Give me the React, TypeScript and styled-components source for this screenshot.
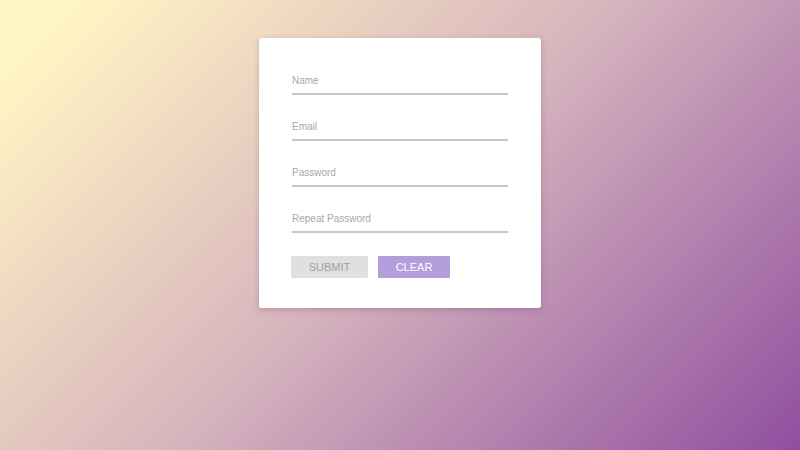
import React from 'react';
import styled, { createGlobalStyle } from 'styled-components';

const GlobalStyle = createGlobalStyle`
    html, body {
        margin: 0;
        padding: 0;
        height: 100%;
    }
    body {
        font-family: 'Liberation Sans', Arial, sans-serif;
        background: linear-gradient(135deg, #fff8c4 0%, #fff3c4 8%, #d6b3bd 50%, #8f4f9f 100%);
        background-attachment: fixed;
    }
    #root {
        min-height: 100%;
    }
`;

interface FieldData {
    name: string;
    label: string;
    type: string;
}

const fields: FieldData[] = [
    { name: 'name', label: 'Name', type: 'text' },
    { name: 'email', label: 'Email', type: 'email' },
    { name: 'password', label: 'Password', type: 'password' },
    { name: 'repeat', label: 'Repeat Password', type: 'password' },
];

const App = () => {
    return (
        <>
            <GlobalStyle />
            <Page>
                <Card>
                    <Form onSubmit={(e) => e.preventDefault()}>
                        {fields.map((field) => (
                            <Field key={field.name}>
                                <Input name={field.name} type={field.type} placeholder={field.label} />
                            </Field>
                        ))}
                        <Actions>
                            <Button type="submit" $variant="muted">
                                Submit
                            </Button>
                            <Button type="reset" $variant="primary">
                                Clear
                            </Button>
                        </Actions>
                    </Form>
                </Card>
            </Page>
        </>
    );
};

export default App;

const Page = styled.div`
    display: flex;
    justify-content: center;
    padding-top: 38px;
    height: 450px;
    box-sizing: border-box;
`;

const Card = styled.div`
    width: 282px;
    height: 270px;
    box-sizing: border-box;
    background: #ffffff;
    border-radius: 3px;
    padding: 11px 32px 0 33px;
    box-shadow: 0 2px 6px rgba(90, 40, 90, 0.25);
`;

const Form = styled.form`
    display: flex;
    flex-direction: column;
`;

const Field = styled.div`
    display: flex;
    align-items: flex-end;
    height: 46px;
    width: 216px;
`;

const Input = styled.input`
    width: 100%;
    box-sizing: border-box;
    border: none;
    border-bottom: 2px solid #c8c8c8;
    outline: none;
    background: transparent;
    padding: 0 0 7px 0;
    font-family: 'Liberation Sans', Arial, sans-serif;
    font-size: 10px;
    color: #555;

    &::placeholder {
        color: #a8a8a8;
    }
`;

const Actions = styled.div`
    display: flex;
    gap: 10px;
    margin-top: 23px;
    margin-left: -1px;
`;

const Button = styled.button<{ $variant: 'muted' | 'primary' }>`
    height: 22px;
    width: ${(p) => (p.$variant === 'muted' ? '77px' : '72px')};
    border: none;
    border-radius: 1px;
    text-transform: uppercase;
    font-family: 'Liberation Sans', Arial, sans-serif;
    font-size: 11px;
    padding: 0;
    cursor: pointer;
    background: ${(p) => (p.$variant === 'muted' ? '#e0e0e0' : '#b39ddb')};
    color: ${(p) => (p.$variant === 'muted' ? '#a0a0a0' : '#ffffff')};
`;
